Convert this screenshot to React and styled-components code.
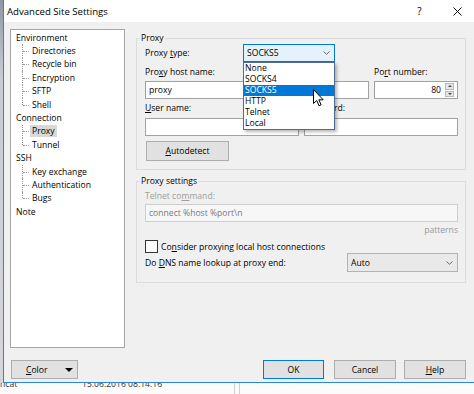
import React from 'react';
import styled, { createGlobalStyle } from 'styled-components';

const GlobalStyle = createGlobalStyle`
  html, body { margin: 0; padding: 0; }
  body {
    font-family: "Open Sans", "Noto Sans", "Liberation Sans", sans-serif;
    font-size: 8.6px;
    color: #000;
    background: #fff;
  }
  * { box-sizing: border-box; }
`;

const Screen = styled.div`
  width: 474px;
  height: 394px;
  overflow: hidden;
  display: flex;
  flex-direction: column;
  background: #f7f7f7;
`;

const Desk = styled.div`
  display: flex;
  height: 383px;
  flex-shrink: 0;
`;

const DeskEdge = styled.div`
  width: 3px;
  flex-shrink: 0;
  background: linear-gradient(#8d98a6, #c8ccd2 20%, #d4d6d9);
`;

const Dialog = styled.div`
  width: 475px;
  flex-shrink: 0;
  display: flex;
  flex-direction: column;
  background: #f0f0f0;
  border-left: 1px solid #2b86d6;
  border-bottom: 1px solid #2b86d6;
`;

const TitleBar = styled.div`
  height: 22px;
  flex-shrink: 0;
  display: flex;
  align-items: center;
  background: #fff;
  padding-left: 3px;
  font-size: 9.6px;
`;

const Caption = styled.div`
  margin-left: auto;
  display: flex;
  height: 100%;
  padding-right: 2px;
`;

const CaptionBtn = styled.div`
  width: ${p => p.$w}px;
  display: flex;
  align-items: center;
  justify-content: center;
  font-size: 10px;
`;

const Body = styled.div`
  flex: 1;
  display: flex;
  flex-direction: column;
  padding-left: 6px;
`;

const Main = styled.div`
  display: flex;
  align-items: flex-start;
`;

/* ---- tree ---- */
const Tree = styled.ul`
  list-style: none;
  margin: 7px 0 0;
  padding: 1px 0 0 3px;
  width: 115px;
  height: 319px;
  flex-shrink: 0;
  background: #fff;
  border: 1px solid #a5a5a5;
`;

const TreeRow = styled.li`
  position: relative;
  height: 13.4px;
  display: flex;
  align-items: center;
  padding-left: ${p => (p.$child ? 16 : 0)}px;
  white-space: nowrap;

  ${p => p.$child && `
    &::before {
      content: '';
      position: absolute;
      left: 8px;
      top: 0;
      bottom: ${p.$last ? '50%' : '0'};
      border-left: 1px dotted #9a9a9a;
    }
    &::after {
      content: '';
      position: absolute;
      left: 9px;
      top: 50%;
      width: 6px;
      border-top: 1px dotted #9a9a9a;
    }
  `}
`;

const TreeLabel = styled.span`
  display: inline-block;
  line-height: 12px;
  padding: 0 2px;
  background: ${p => (p.$selected ? '#d9d9d9' : 'transparent')};
`;

/* ---- groups ---- */
const Right = styled.div`
  width: 330px;
  margin: 10px 0 0 11px;
  flex-shrink: 0;
`;

const Group = styled.fieldset`
  margin: ${p => p.$top || 0}px 0 0;
  padding: 0 7px ${p => p.$bottom}px 8px;
  border: 1px solid #dcdcdc;
  min-width: 0;
`;

const Legend = styled.legend`
  margin-left: -5px;
  padding: 0 1px;
  line-height: 12px;
`;

const Row = styled.div`
  display: flex;
  align-items: center;
  gap: ${p => p.$gap || 0}px;
  margin-top: ${p => p.$mt || 0}px;
  height: ${p => (p.$h ? `${p.$h}px` : 'auto')};
`;

const Label = styled.div`
  line-height: 12px;
  white-space: nowrap;
  width: ${p => (p.$w ? `${p.$w}px` : 'auto')};
  flex-shrink: 0;
  color: ${p => (p.$disabled ? '#9d9d9d' : '#000')};
`;

const Key = styled.span`
  text-decoration: underline;
  text-underline-offset: 1px;
`;

const Field = styled.div`
  position: relative;
  height: 18px;
  width: ${p => (p.$w ? `${p.$w}px` : '100%')};
  flex-shrink: 0;
  display: flex;
  align-items: center;
  justify-content: ${p => (p.$right ? 'flex-end' : 'flex-start')};
  padding: 0 ${p => (p.$right ? 16 : 2)}px 0 3px;
  background: ${p => (p.$disabled ? '#f7f7f7' : '#fff')};
  border: 1px solid ${p => (p.$disabled ? '#cfcfcf' : '#a2a2a2')};
  color: ${p => (p.$disabled ? '#7a7a7a' : '#000')};
  white-space: nowrap;
`;

const Spin = styled.div`
  position: absolute;
  right: 3px;
  top: 1px;
  width: 9px;
  height: 14px;
  display: flex;
  flex-direction: column;
  gap: 1px;
`;

const SpinHalf = styled.div`
  flex: 1;
  background: #e6e6e6;
  border: 1px solid #b9b9b9;
  display: flex;
  align-items: center;
  justify-content: center;
  &::after {
    content: '';
    border-left: 2px solid transparent;
    border-right: 2px solid transparent;
    ${p => (p.$up ? 'border-bottom' : 'border-top')}: 2px solid #444;
  }
`;

const Combo = styled.div`
  position: relative;
  width: ${p => p.$w}px;
  height: ${p => p.$h || 18}px;
  margin-left: ${p => p.$ml || 0}px;
  flex-shrink: 0;
  display: flex;
  align-items: center;
  padding: 0 3px;
  background: ${p => (p.$focus ? '#e5f1fb' : '#e9e9e9')};
  border: 1px solid ${p => (p.$focus ? '#0078d7' : '#b3b3b3')};
`;

const Chevron = styled.svg`
  margin-left: auto;
  margin-right: 1px;
`;

const DropList = styled.ul`
  position: absolute;
  z-index: 5;
  left: -1px;
  top: 17px;
  width: 92px;
  margin: 0;
  padding: 0;
  list-style: none;
  background: #fff;
  border: 1px solid #4d6f96;
  box-shadow: 2px 2px 3px rgba(0, 0, 0, 0.28);
`;

const DropItem = styled.li`
  height: 11px;
  line-height: 11px;
  padding-left: 1px;
  background: ${p => (p.$active ? '#0078d7' : 'transparent')};
  color: ${p => (p.$active ? '#fff' : '#000')};
`;

const Pointer = styled.svg`
  position: absolute;
  left: 69px;
  top: 26px;
  z-index: 6;
`;

const Button = styled.button`
  width: ${p => p.$w}px;
  height: ${p => p.$h || 19}px;
  margin-left: ${p => p.$ml || 0}px;
  flex-shrink: 0;
  padding: 0;
  font: inherit;
  color: #000;
  background: #e1e1e1;
  border: 1px solid ${p => (p.$default ? '#0078d7' : '#adadad')};
  display: flex;
  align-items: center;
  justify-content: center;
`;

const SplitText = styled.span`
  flex: 1;
  text-align: left;
  padding-left: 14px;
`;

const Triangle = styled.span`
  width: 0;
  height: 0;
  margin-right: 4px;
  border-left: 4px solid transparent;
  border-right: 4px solid transparent;
  border-top: 4px solid #000;
`;

const Patterns = styled.div`
  margin-top: 2px;
  line-height: 12px;
  text-align: right;
  color: #9a9a9a;
`;

const Check = styled.span`
  width: 13px;
  height: 13px;
  flex-shrink: 0;
  background: #fff;
  border: 1px solid #333;
`;

const Footer = styled.div`
  display: flex;
  align-items: center;
  margin-top: 12px;
  padding: 0 9px 0 1px;
`;

/* ---- window behind ---- */
const BackStrip = styled.div`
  height: 11px;
  flex-shrink: 0;
  display: flex;
  overflow: hidden;
  background: #fbfbfb;
  color: #333;
`;

const BackCell = styled.div`
  width: ${p => p.$w}px;
  flex-shrink: 0;
  margin-top: -7px;
  line-height: 16px;
  padding-left: ${p => p.$pl || 0}px;
  border-right: ${p => (p.$sep ? '1px solid #d0d0d0' : 'none')};
  white-space: nowrap;
`;

const tree = [
  { label: 'Environment', children: ['Directories', 'Recycle bin', 'Encryption', 'SFTP', 'Shell'] },
  { label: 'Connection', children: ['Proxy', 'Tunnel'] },
  { label: 'SSH', children: ['Key exchange', 'Authentication', 'Bugs'] },
  { label: 'Note', children: [] },
];

const proxyTypes = ['None', 'SOCKS4', 'SOCKS5', 'HTTP', 'Telnet', 'Local'];

const Down = () => (
  <Chevron width="7" height="4" viewBox="0 0 7 4">
    <path d="M0.5 0.5 L3.5 3.3 L6.5 0.5" fill="none" stroke="#6a6a6a" strokeWidth="1" />
  </Chevron>
);

export default function App() {
  return (
    <Screen>
      <GlobalStyle />
      <Desk>
        <DeskEdge />
        <Dialog>
          <TitleBar>
            Advanced Site Settings
            <Caption>
              <CaptionBtn $w={37}>?</CaptionBtn>
              <CaptionBtn $w={38}>
                <svg width="9" height="9" viewBox="0 0 9 9">
                  <path d="M0.5 0.5 L8.5 8.5 M8.5 0.5 L0.5 8.5" stroke="#111" strokeWidth="1" />
                </svg>
              </CaptionBtn>
            </Caption>
          </TitleBar>

          <Body>
            <Main>
              <Tree>
                {tree.map(node => (
                  <React.Fragment key={node.label}>
                    <TreeRow>
                      <TreeLabel>{node.label}</TreeLabel>
                    </TreeRow>
                    {node.children.map((c, i) => (
                      <TreeRow key={c} $child $last={i === node.children.length - 1}>
                        <TreeLabel $selected={c === 'Proxy'}>{c}</TreeLabel>
                      </TreeRow>
                    ))}
                  </React.Fragment>
                ))}
              </Tree>

              <Right>
                <Group $bottom={8}>
                  <Legend>Proxy</Legend>
                  <Row $h={18}>
                    <Label $w={98}>Proxy <Key>t</Key>ype:</Label>
                    <Combo $w={92} $focus>
                      SOCKS5
                      <Down />
                      <DropList>
                        {proxyTypes.map(t => (
                          <DropItem key={t} $active={t === 'SOCKS5'}>{t}</DropItem>
                        ))}
                        <Pointer width="11" height="18" viewBox="0 0 11 18">
                          <path
                            d="M0.5 0.5 V14.5 L3.8 11.5 L6 16.8 L8.1 15.9 L5.9 10.8 H10.2 Z"
                            fill="#fff"
                            stroke="#000"
                            strokeWidth="1"
                            strokeLinejoin="round"
                          />
                        </Pointer>
                      </DropList>
                    </Combo>
                  </Row>

                  <Row $mt={4} $gap={5}>
                    <Label $w={224}>Pro<Key>x</Key>y host name:</Label>
                    <Label>Po<Key>r</Key>t number:</Label>
                  </Row>
                  <Row $mt={3} $gap={5}>
                    <Field $w={224}>proxy</Field>
                    <Field $w={84} $right>
                      80
                      <Spin>
                        <SpinHalf $up />
                        <SpinHalf />
                      </Spin>
                    </Field>
                  </Row>

                  <Row $mt={3} $gap={5}>
                    <Label $w={154}><Key>U</Key>ser name:</Label>
                    <Label>Pass<Key>w</Key>ord:</Label>
                  </Row>
                  <Row $mt={4} $gap={5}>
                    <Field $w={154} />
                    <Field $w={154} />
                  </Row>

                  <Row $mt={5}>
                    <Button $w={83} $h={20} $ml={1}>
                      <Key>A</Key>utodetect
                    </Button>
                  </Row>
                </Group>

                <Group $top={5} $bottom={10}>
                  <Legend>Proxy settings</Legend>
                  <Row $mt={3}>
                    <Label $disabled>Telnet co<Key>m</Key>mand:</Label>
                  </Row>
                  <Row $mt={2}>
                    <Field $disabled>connect %host %port\n</Field>
                  </Row>
                  <Patterns>patterns</Patterns>
                  <Row $mt={4} $gap={3} $h={13}>
                    <Check />
                    <Label>Co<Key>n</Key>sider proxying local host connections</Label>
                  </Row>
                  <Row $h={19}>
                    <Label>Do <Key>D</Key>NS name lookup at proxy end:</Label>
                    <Combo $w={111} $h={19} style={{ marginLeft: 'auto' }}>
                      Auto
                      <Down />
                    </Combo>
                  </Row>
                </Group>
              </Right>
            </Main>

            <Footer>
              <Button $w={67}>
                <SplitText><Key>C</Key>olor</SplitText>
                <Triangle />
              </Button>
              <Button $w={61} $ml={185} $default>OK</Button>
              <Button $w={62} $ml={10}>Cancel</Button>
              <Button $w={62} $ml={8}><Key>H</Key>elp</Button>
            </Footer>
          </Body>
        </Dialog>
      </Desk>

      <BackStrip>
        <BackCell $w={80}>ncat</BackCell>
        <BackCell $w={155} $pl={2} $sep>15.06.2016 08:14:16</BackCell>
        <BackCell $w={5} $sep />
        <BackCell $w={234} />
      </BackStrip>
    </Screen>
  );
}
